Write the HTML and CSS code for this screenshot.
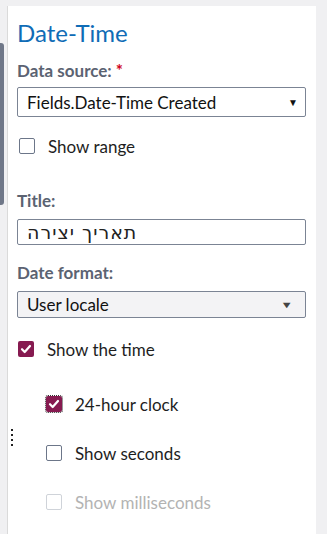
FILE: index.html
```html
<!DOCTYPE html>
<html lang="en">
<head>
    <meta charset="UTF-8">
    <meta name="viewport" content="width=device-width, initial-scale=1.0">
    <title>Date-Time</title>
    <link rel="stylesheet" href="styles.css">
</head>
<body>
    <div class="layout">
        <div class="rail">
            <div class="rail-handle"></div>
        </div>

        <div class="panel">
            <div class="grip"><span></span><span></span><span></span><span></span></div>

            <h2 class="panel-title">Date-Time</h2>

            <div class="field-label label-source">Data source: <span class="required">*</span></div>
            <div class="select">
                <span>Fields.Date-Time Created</span>
                <span class="arrow">&#9660;</span>
            </div>

            <label class="check check-range">
                <span class="box"></span>
                <span>Show range</span>
            </label>

            <div class="field-label label-title">Title:</div>
            <div class="text-input">תאריך יצירה</div>

            <div class="field-label label-format">Date format:</div>
            <div class="select select-gray">
                <span>User locale</span>
                <span class="arrow">&#9660;</span>
            </div>

            <label class="check check-time">
                <span class="box checked">
                    <svg viewBox="0 0 16 16" width="16" height="16"><path d="M4 8.2l2.7 2.8L12 5" fill="none" stroke="#fff" stroke-width="2.2" stroke-linecap="round" stroke-linejoin="round"/></svg>
                </span>
                <span>Show the time</span>
            </label>

            <div class="sub-options">
                <label class="check">
                    <span class="box checked focused">
                        <svg viewBox="0 0 16 16" width="16" height="16"><path d="M4 8.2l2.7 2.8L12 5" fill="none" stroke="#fff" stroke-width="2.2" stroke-linecap="round" stroke-linejoin="round"/></svg>
                    </span>
                    <span>24-hour clock</span>
                </label>

                <label class="check">
                    <span class="box"></span>
                    <span>Show seconds</span>
                </label>

                <label class="check disabled">
                    <span class="box"></span>
                    <span>Show milliseconds</span>
                </label>
            </div>
        </div>

        <div class="gutter"></div>
    </div>
</body>
</html>
```

FILE: styles.css
```css
body {
    margin: 0;
    background-color: #f0f0f2;
    font-family: Lato, "Noto Sans", sans-serif;
    color: #1e1e1e;
}

.layout {
    display: flex;
    height: 534px;
    overflow: hidden;
}

.rail {
    width: 7px;
    flex-shrink: 0;
}

.rail-handle {
    margin-top: 43px;
    width: 4px;
    height: 162px;
    background-color: #6f7788;
    border-radius: 0 3px 3px 0;
}

.panel {
    position: relative;
    margin-top: 6px;
    width: 299px;
    flex-shrink: 0;
    padding: 13px 0 0 9px;
    background-color: #fff;
    border-left: 1px solid #dadada;
}

.gutter {
    flex: 1;
}

/* resize grip on the left edge */
.grip {
    position: absolute;
    left: 3px;
    top: 423px;
    display: flex;
    flex-direction: column;
    gap: 3px;
}

.grip span {
    width: 2px;
    height: 2px;
    background-color: #222;
}

.panel-title {
    margin: 0;
    font-size: 24px;
    font-weight: normal;
    line-height: 28px;
    color: #0f6cb6;
}

.field-label {
    margin-top: 12px;
    font-size: 17px;
    font-weight: bold;
    line-height: 20px;
    color: #5b6372;
}

.label-source {
    margin-top: 14px;
}

.required {
    color: #d0021b;
}

.select {
    margin-top: 6px;
    width: 289px;
    height: 30px;
    box-sizing: border-box;
    display: flex;
    align-items: center;
    justify-content: space-between;
    padding: 0 7px 0 9px;
    border: 1px solid #7b8494;
    border-radius: 2px;
    font-size: 17px;
    color: #111;
}

.select .arrow {
    font-size: 10px;
}

.select-gray {
    margin-top: 8px;
    height: 27px;
    background-color: #f3f3f5;
    padding-right: 12px;
}

.select-gray .arrow {
    font-size: 13px;
    color: #444;
    transform: scaleY(0.7);
}

.check {
    display: flex;
    align-items: center;
    gap: 13px;
    font-size: 17px;
    color: #1e1e1e;
    height: 20px;
}

.box {
    width: 14px;
    height: 14px;
    flex-shrink: 0;
    border: 1px solid #6c7689;
    border-radius: 2px;
    background-color: #fff;
    display: flex;
    align-items: center;
    justify-content: center;
}

.box.checked {
    width: 16px;
    height: 16px;
    border: none;
    background-color: #861a50;
}

.box.focused {
    outline: 1px dotted #333;
    outline-offset: 0;
}

.check-range {
    margin: 19px 0 0 2px;
}

.label-title {
    margin-top: 35px;
}

.text-input {
    margin-top: 8px;
    width: 289px;
    height: 26px;
    box-sizing: border-box;
    padding: 0 9px;
    border: 1px solid #7b8494;
    border-radius: 2px;
    font-family: "DejaVu Sans", sans-serif;
    font-size: 19px;
    letter-spacing: 1px;
    line-height: 24px;
    color: #222;
}

.label-format {
    margin-top: 18px;
}

.check-time {
    margin: 21px 0 0 1px;
}

.sub-options {
    padding-left: 29px;
    display: flex;
    flex-direction: column;
    gap: 29px;
    margin-top: 35px;
}

.check.disabled {
    color: #b3b3b3;
}

.check.disabled .box {
    border-color: #cfd3d9;
}
```
